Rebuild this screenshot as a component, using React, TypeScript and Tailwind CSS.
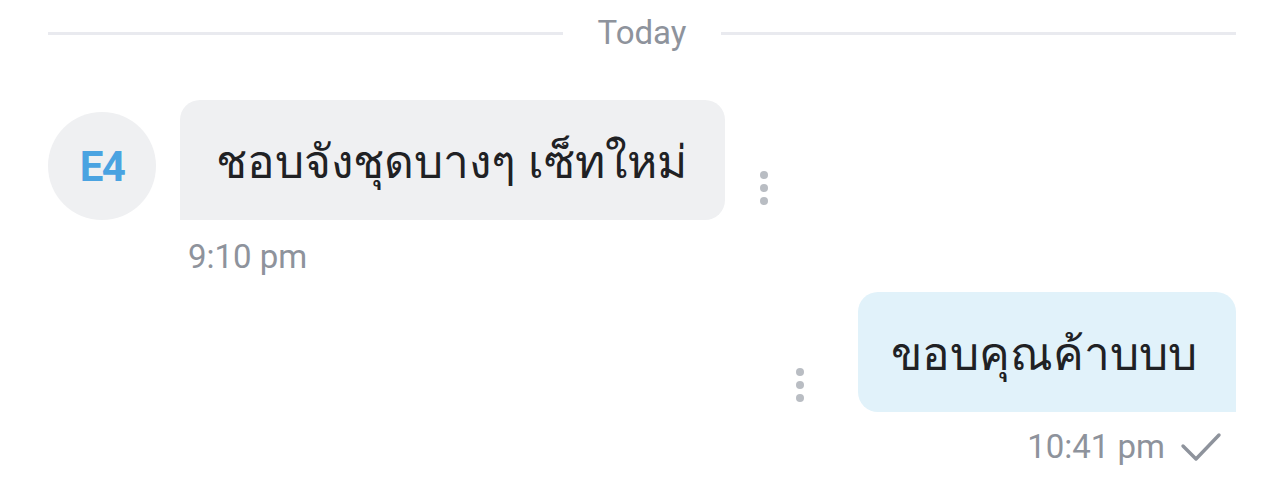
import React from 'react';

const Dots = () => (
  <div className="flex flex-col gap-[5px]">
    <span className="block w-[8px] h-[8px] rounded-full bg-[#b9bdc3]" />
    <span className="block w-[8px] h-[8px] rounded-full bg-[#b9bdc3]" />
    <span className="block w-[8px] h-[8px] rounded-full bg-[#b9bdc3]" />
  </div>
);

const Check = () => (
  <svg width="42" height="32" viewBox="0 0 42 32" fill="none">
    <path d="M3 15 L16 28 L39 4" stroke="#8e939c" strokeWidth="3.4" strokeLinecap="round" strokeLinejoin="round" />
  </svg>
);

export default function App() {
  return (
    <div className="w-[1284px] h-[499px] bg-white overflow-hidden font-['Roboto','Noto_Sans',sans-serif]">
      {/* date divider */}
      <div className="flex items-center px-[48px] pt-[13px]">
        <div className="flex-1 h-[3px] bg-[#e9eaef]" />
        <span className="px-[35px] text-[33px] leading-[40px] text-[#8e939c]">Today</span>
        <div className="flex-1 h-[3px] bg-[#e9eaef]" />
      </div>

      {/* incoming */}
      <div className="flex items-end mt-[47px] pl-[48px]">
        <div className="w-[108px] h-[108px] rounded-full bg-[#eff0f2] flex items-center justify-center">
          <span className="text-[42px] font-bold text-[#4aa3e1] tracking-[-1.5px]">E4</span>
        </div>
        <div className="ml-[24px] flex items-end">
          <div className="h-[120px] flex items-center pl-[36px] pr-[38px] bg-[#eff0f2] rounded-[20px] rounded-bl-none">
            <span className="text-[46px] text-[#202124] font-['Noto_Sans','DejaVu_Sans',sans-serif]">ชอบจังชุดบางๆ เซ็ทใหม่</span>
          </div>
          <div className="ml-[35px] mb-[15px]">
            <Dots />
          </div>
        </div>
      </div>
      <div className="pl-[188px] mt-[17px] text-[33px] leading-[40px] text-[#8e939c]">9:10 pm</div>

      {/* outgoing */}
      <div className="flex items-end justify-end pr-[48px] mt-[15px]">
        <div className="mr-[54px] mb-[10px]">
          <Dots />
        </div>
        <div className="h-[120px] flex items-center pl-[33px] pr-[39px] bg-[#e1f2fa] rounded-[20px] rounded-br-none">
          <span className="text-[46px] text-[#202124] font-['Noto_Sans','DejaVu_Sans',sans-serif]">ขอบคุณค้าบบบ</span>
        </div>
      </div>
      <div className="flex items-center justify-end pr-[62px] mt-[15px] gap-[15px]">
        <span className="text-[33px] leading-[40px] text-[#8e939c]">10:41 pm</span>
        <Check />
      </div>
    </div>
  );
}
